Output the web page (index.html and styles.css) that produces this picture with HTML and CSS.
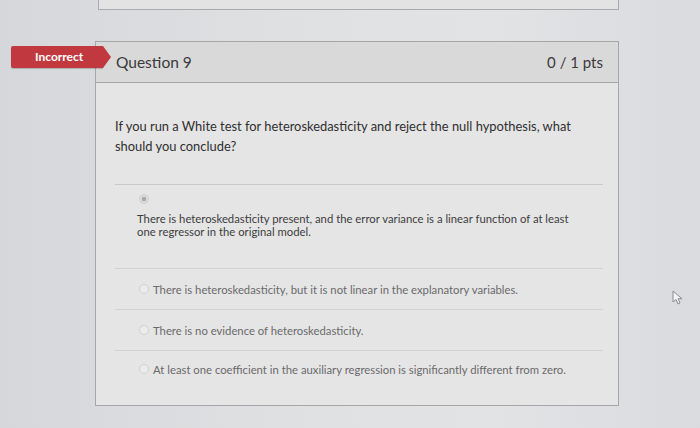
FILE: index.html
```html
<!DOCTYPE html>
<html>
<head>
<meta charset="utf-8">
<link rel="stylesheet" href="styles.css">
</head>
<body>
<div class="page">
  <div class="prev-card"></div>
  <div class="question">
    <div class="badge">Incorrect</div>
    <div class="q-header">
      <span class="q-title">Question 9</span>
      <span class="q-pts">0 / 1 pts</span>
    </div>
    <div class="q-body">
      <p class="q-text">If you run a White test for heteroskedasticity and reject the null hypothesis, what should you conclude?</p>
      <div class="answers">
        <div class="answer selected">
          <span class="radio checked"></span>
          <span class="a-text">There is heteroskedasticity present, and the error variance is a linear function of at least one regressor in the original model.</span>
        </div>
        <div class="answer">
          <span class="radio"></span>
          <span class="a-text">There is heteroskedasticity, but it is not linear in the explanatory variables.</span>
        </div>
        <div class="answer">
          <span class="radio"></span>
          <span class="a-text">There is no evidence of heteroskedasticity.</span>
        </div>
        <div class="answer last">
          <span class="radio"></span>
          <span class="a-text">At least one coefficient in the auxiliary regression is significantly different from zero.</span>
        </div>
      </div>
    </div>
  </div>
  <svg class="cursor" width="12" height="16" viewBox="0 0 12 16"><path d="M1 1 L1 12 L4 9.5 L6 14 L8 13 L6 8.8 L10 8.8 Z" fill="#f4f4f4" stroke="#8a8a8a" stroke-width="1"/></svg>
</div>
</body>
</html>
```
FILE: styles.css
```css
html, body {
  margin: 0;
  padding: 0;
}
body {
  width: 700px;
  height: 428px;
  overflow: hidden;
  background: linear-gradient(90deg, #d6d7da 0%, #dfe0e2 40%, #e2e3e5 70%, #dadbde 100%);
  font-family: Lato, "Open Sans", sans-serif;
}
.page {
  position: relative;
  height: 428px;
}
.prev-card {
  margin-left: 98px;
  width: 519px;
  height: 9px;
  border: 1px solid #a9aaad;
  border-top: none;
  background: #e3e3e4;
}
.question {
  position: relative;
  margin-top: 31px;
  margin-left: 95px;
  width: 522px;
  border: 1px solid #a5a6a8;
  background: #e5e5e6;
}
.badge {
  position: absolute;
  left: -85px;
  top: 4px;
  height: 22px;
  width: 92px;
  background: #c1393f;
  color: #fff;
  font-size: 12px;
  font-weight: 700;
  line-height: 22px;
  padding-left: 24px;
  box-sizing: border-box;
  border-radius: 2px 0 0 2px;
  box-shadow: 0 1px 1px rgba(0,0,0,0.2);
}
.badge::after {
  content: "";
  position: absolute;
  right: -8px;
  top: 0;
  border-top: 11px solid transparent;
  border-bottom: 11px solid transparent;
  border-left: 8px solid #c1393f;
}
.q-header {
  display: flex;
  justify-content: space-between;
  align-items: center;
  height: 40px;
  padding: 0 15px 0 20px;
  background: #d9d9da;
  border-bottom: 1px solid #a5a6a8;
  color: #3a3a3a;
}
.q-title {
  font-size: 15.5px;
}
.q-pts {
  font-size: 15px;
}
.q-body {
  padding: 33px 15px 18px 19px;
}
.q-text {
  margin: 0;
  font-size: 12.9px;
  line-height: 20px;
  color: #2f2f2f;
}
.answers {
  margin-top: 28px;
  border-top: 1px solid #c8c8ca;
}
.answer {
  display: flex;
  align-items: center;
  gap: 4px;
  padding: 0 0 0 24px;
  height: 40px;
  border-bottom: 1px solid #d2d2d4;
  font-size: 11.3px;
  color: #6a6a6a;
}
.answer.last {
  border-bottom: none;
  height: 36px;
}
.answer.selected {
  display: block;
  height: auto;
  padding: 9px 30px 30px 22px;
  color: #3d3d3d;
  line-height: 13px;
}
.answer.selected .radio {
  display: block;
  margin: 0 0 8px 2px;
}
.radio {
  flex: none;
  width: 8px;
  height: 8px;
  border: 1px solid #d0d0d2;
  border-radius: 50%;
  background: #ebebec;
}
.radio.checked {
  background: radial-gradient(circle, #a8a8aa 0 2px, #dadadb 2.5px);
  border-color: #cfcfd0;
}
.cursor {
  position: absolute;
  left: 672px;
  top: 290px;
}
```
